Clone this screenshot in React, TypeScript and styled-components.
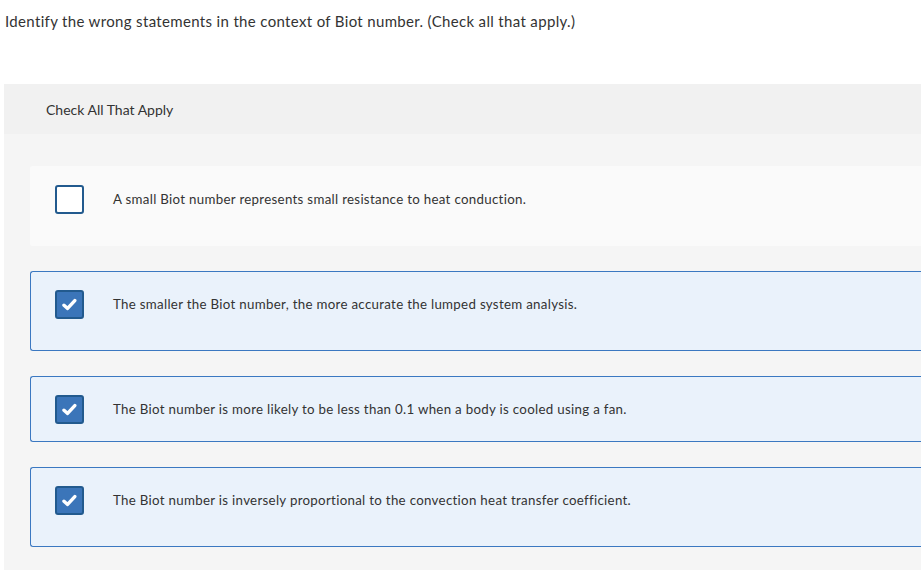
import React from "react";
import styled, { createGlobalStyle } from "styled-components";

const Global = createGlobalStyle`
  html, body { margin: 0; padding: 0; background: #ffffff; }
  body { font-family: Lato, "Open Sans", "Liberation Sans", sans-serif; color: #333333; }
`;

const Page = styled.div`
  width: 921px;
  height: 570px;
  overflow: hidden;
  padding-left: 4px;
  box-sizing: border-box;
`;

const Title = styled.h1`
  margin: 0;
  padding: 11px 0 0 1px;
  height: 84px;
  box-sizing: border-box;
  font-size: 15px;
  letter-spacing: 0.34px;
  line-height: 20px;
  font-weight: 400;
  color: #333333;
`;

const Panel = styled.section`
  background: #f5f5f5;
  margin-right: -40px;
`;

const PanelHeader = styled.div`
  height: 50px;
  display: flex;
  align-items: center;
  padding-left: 42px;
  background: #f1f1f1;
  font-size: 14px;
  color: #333333;
`;

const List = styled.div`
  display: flex;
  flex-direction: column;
  gap: 25px;
  padding: 32px 0 30px 26px;
`;

const Item = styled.label<{ $checked: boolean; $tall: boolean }>`
  display: flex;
  align-items: flex-start;
  gap: 29px;
  padding: 18px 0 ${(p) => (p.$tall ? 31 : 17)}px 24px;
  border: 1px solid ${(p) => (p.$checked ? "#3b78c1" : "#fafafa")};
  border-right: none;
  border-radius: 3px 0 0 3px;
  background: ${(p) => (p.$checked ? "#eaf2fb" : "#fafafa")};
  cursor: pointer;
`;

const Box = styled.span<{ $checked: boolean }>`
  flex: none;
  width: 29px;
  height: 29px;
  box-sizing: border-box;
  border: 2px solid #225a8e;
  border-radius: 3px;
  background: ${(p) => (p.$checked ? "#3b75b9" : "#ffffff")};
  display: flex;
  align-items: center;
  justify-content: center;
`;

const Text = styled.span`
  font-size: 13.3px;
  letter-spacing: 0.3px;
  line-height: 29px;
  color: #333333;
`;

const items = [
  { text: "A small Biot number represents small resistance to heat conduction.", checked: false, tall: true },
  { text: "The smaller the Biot number, the more accurate the lumped system analysis.", checked: true, tall: true },
  { text: "The Biot number is more likely to be less than 0.1 when a body is cooled using a fan.", checked: true, tall: false },
  { text: "The Biot number is inversely proportional to the convection heat transfer coefficient.", checked: true, tall: true },
];

const Check = () => (
  <svg width="15" height="13" viewBox="0 0 15 13" aria-hidden="true">
    <path d="M2 7.2 L5.6 10.4 L12.8 2.6" fill="none" stroke="#ffffff" strokeWidth="3.4" strokeLinecap="round" strokeLinejoin="round" />
  </svg>
);

export default function App() {
  return (
    <Page>
      <Global />
      <Title>Identify the wrong statements in the context of Biot number. (Check all that apply.)</Title>
      <Panel>
        <PanelHeader>Check All That Apply</PanelHeader>
        <List>
          {items.map((it) => (
            <Item key={it.text} $checked={it.checked} $tall={it.tall}>
              <Box $checked={it.checked}>{it.checked && <Check />}</Box>
              <Text>{it.text}</Text>
            </Item>
          ))}
        </List>
      </Panel>
    </Page>
  );
}
